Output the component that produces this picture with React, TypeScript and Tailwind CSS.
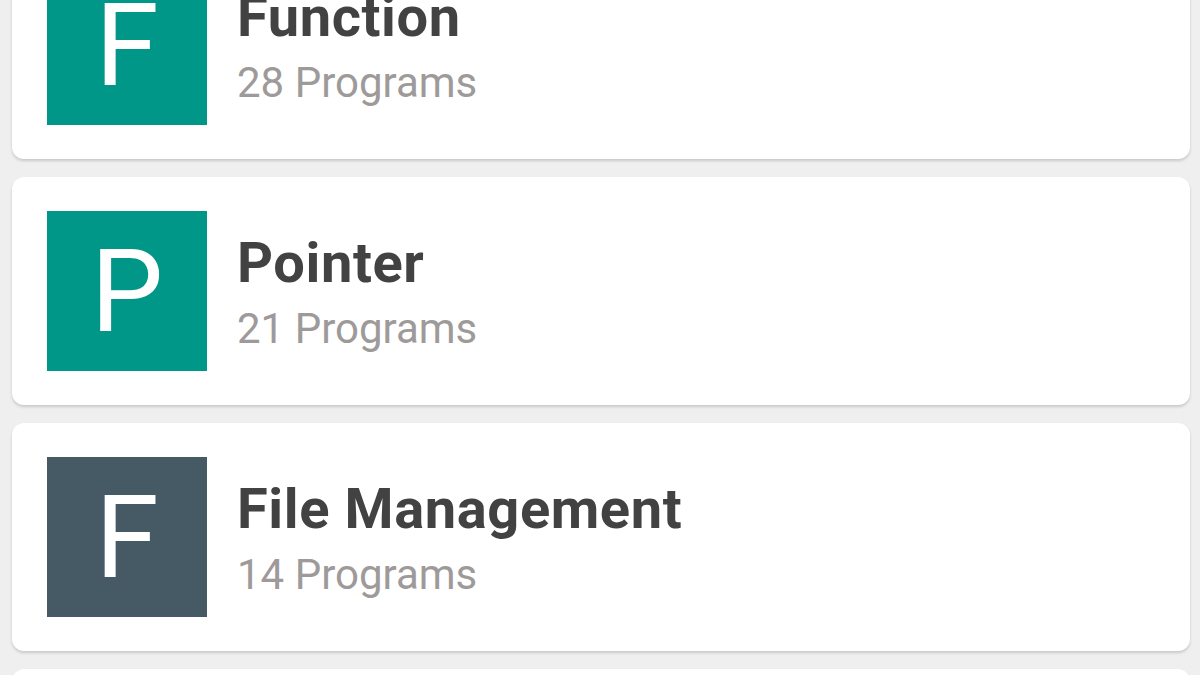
import React from 'react';

const CATEGORIES = [
  { letter: 'F', title: 'Function', count: 28, color: 'bg-[#009688]' },
  { letter: 'P', title: 'Pointer', count: 21, color: 'bg-[#009688]' },
  { letter: 'F', title: 'File Management', count: 14, color: 'bg-[#455a64]' },
  { letter: 'S', title: 'Structure', count: 12, color: 'bg-[#009688]' },
];

function CategoryCard({ letter, title, count, color }: (typeof CATEGORIES)[number]) {
  return (
    <div className="flex items-start gap-[30px] rounded-[12px] bg-white px-[35px] py-[34px] shadow-[0_2px_3px_rgba(0,0,0,0.16)]">
      <div className={`${color} flex h-[160px] w-[160px] shrink-0 items-center justify-center`}>
        <span className="text-[115px] font-normal leading-none text-white">{letter}</span>
      </div>
      <div className="flex flex-col pt-[22px]">
        <span className="text-[56px] font-bold leading-[60px] tracking-[0.6px] text-[#424242]">{title}</span>
        <span className="mt-[11px] text-[42px] leading-[50px] text-[#9e9a9a]">{count} Programs</span>
      </div>
    </div>
  );
}

export default function App() {
  return (
    <div
      className="h-[675px] w-[1200px] overflow-hidden bg-[#efefef]"
      style={{ fontFamily: 'Roboto, "Noto Sans", sans-serif' }}
    >
      <div className="-mt-[69px] flex flex-col gap-[18px] px-[12px] pr-[10px]">
        {CATEGORIES.map((c, i) => (
          <CategoryCard key={i} {...c} />
        ))}
      </div>
    </div>
  );
}
